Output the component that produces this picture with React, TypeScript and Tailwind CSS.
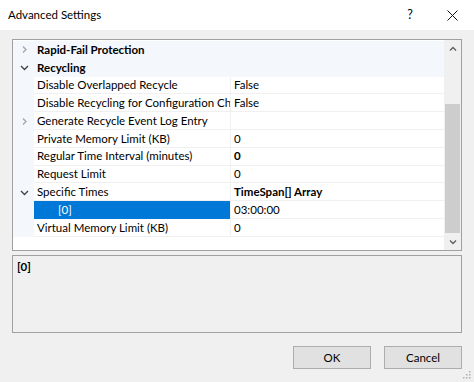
import React from 'react';

type Row = {
  name: string;
  value?: string;
  kind: 'category' | 'prop' | 'child';
  chevron?: 'collapsed' | 'expanded';
  boldValue?: boolean;
  selected?: boolean;
};

const rows: Row[] = [
  { name: 'Rapid-Fail Protection', kind: 'category', chevron: 'collapsed' },
  { name: 'Recycling', kind: 'category', chevron: 'expanded' },
  { name: 'Disable Overlapped Recycle', value: 'False', kind: 'prop' },
  { name: 'Disable Recycling for Configuration Changes', value: 'False', kind: 'prop' },
  { name: 'Generate Recycle Event Log Entry', value: '', kind: 'prop', chevron: 'collapsed' },
  { name: 'Private Memory Limit (KB)', value: '0', kind: 'prop' },
  { name: 'Regular Time Interval (minutes)', value: '0', kind: 'prop', boldValue: true },
  { name: 'Request Limit', value: '0', kind: 'prop' },
  { name: 'Specific Times', value: 'TimeSpan[] Array', kind: 'prop', chevron: 'expanded', boldValue: true },
  { name: '[0]', value: '03:00:00', kind: 'child', selected: true },
  { name: 'Virtual Memory Limit (KB)', value: '0', kind: 'prop' },
];

const Chevron: React.FC<{ dir: 'collapsed' | 'expanded' }> = ({ dir }) =>
  dir === 'collapsed' ? (
    <svg width="9" height="9" viewBox="0 0 9 9" className="block">
      <path d="M3 1.5 L6 4.5 L3 7.5" fill="none" stroke="#a6a6a6" strokeWidth="1.3" />
    </svg>
  ) : (
    <svg width="9" height="9" viewBox="0 0 9 9" className="block">
      <path d="M1 3 L4.5 6.5 L8 3" fill="none" stroke="#404040" strokeWidth="1.3" />
    </svg>
  );

const GridRow: React.FC<{ row: Row }> = ({ row }) => {
  if (row.kind === 'category') {
    return (
      <div className="flex h-[17.8px] bg-[#f4f7fc] items-center">
        <div className="w-[21px] flex justify-center pl-[1px]">
          {row.chevron && <Chevron dir={row.chevron} />}
        </div>
        <div className="pl-[3px] font-bold text-black">{row.name}</div>
      </div>
    );
  }
  return (
    <div className="flex h-[17.8px]">
      <div className="w-[21px] shrink-0 bg-[#f4f7fc] flex items-center justify-center pl-[1px]">
        {row.chevron && <Chevron dir={row.chevron} />}
      </div>
      <div
        className={
          row.selected
            ? 'w-[196px] shrink-0 bg-[#0078d7] text-white pl-[24px] flex items-center overflow-hidden whitespace-nowrap'
            : 'w-[196px] shrink-0 border-b border-[#f0f0f0] pl-[3px] flex items-center overflow-hidden whitespace-nowrap text-black'
        }
      >
        {row.name}
      </div>
      <div
        className={
          'flex-1 border-l border-b border-[#f0f0f0] pl-[3px] flex items-center whitespace-nowrap overflow-hidden text-black ' +
          (row.boldValue ? 'font-bold' : '')
        }
      >
        {row.value}
      </div>
    </div>
  );
};

export default function App() {
  return (
    <div
      className="w-[474px] h-[382px] bg-[#f0f0f0] flex flex-col relative overflow-hidden text-[11.5px] leading-none"
      style={{ fontFamily: '"Segoe UI", Lato, "Noto Sans", Arial, sans-serif' }}
    >
      <div className="h-[30px] bg-white flex items-center pl-[8px] pr-[12px] shrink-0">
        <span className="text-[11.5px] text-black">Advanced Settings</span>
        <div className="ml-auto flex items-center gap-[22px]">
          <span className="w-[20px] text-center text-[12.5px] text-black">?</span>
          <div className="w-[20px] flex justify-center">
            <svg width="11" height="11" viewBox="0 0 11 11">
              <path d="M0.5 0.5 L10.5 10.5 M10.5 0.5 L0.5 10.5" stroke="#111" strokeWidth="1" />
            </svg>
          </div>
        </div>
      </div>

      <div className="px-[12px] pt-[9px] flex flex-col">
        <div className="h-[212px] border border-[#a0a0a0] bg-white flex">
          <div className="flex-1 flex flex-col pt-[1px]">
            {rows.map((r, i) => (
              <GridRow key={i} row={r} />
            ))}
          </div>
          <div className="w-[17px] bg-[#f0f0f0] flex flex-col">
            <div className="h-[17px] flex items-center justify-center">
              <svg width="8" height="6" viewBox="0 0 8 6">
                <path d="M1 4.5 L4 1.5 L7 4.5" fill="none" stroke="#606060" strokeWidth="1.4" />
              </svg>
            </div>
            <div className="h-[47px]" />
            <div className="flex-1 bg-[#cdcdcd] mx-[1px]" />
            <div className="h-[17px] flex items-center justify-center">
              <svg width="8" height="6" viewBox="0 0 8 6">
                <path d="M1 1.5 L4 4.5 L7 1.5" fill="none" stroke="#606060" strokeWidth="1.4" />
              </svg>
            </div>
          </div>
        </div>

        <div className="mt-[4px] h-[78px] border border-[#a0a0a0] bg-[#f0f0f0] pl-[4px] pt-[5px]">
          <span className="font-bold text-black">[0]</span>
        </div>

        <div className="mt-[13px] flex justify-end gap-[13px]">
          <button className="w-[78px] h-[23px] bg-[#e1e1e1] border border-[#adadad] text-black text-[11.5px]">
            OK
          </button>
          <button className="w-[78px] h-[23px] bg-[#e1e1e1] border border-[#adadad] text-black text-[11.5px]">
            Cancel
          </button>
        </div>
      </div>

      <svg width="10" height="10" viewBox="0 0 10 10" className="absolute right-[2px] bottom-[2px]">
        <rect x="7" y="1" width="1.5" height="1.5" fill="#b0b0b0" />
        <rect x="4" y="4" width="1.5" height="1.5" fill="#b0b0b0" />
        <rect x="7" y="4" width="1.5" height="1.5" fill="#b0b0b0" />
        <rect x="1" y="7" width="1.5" height="1.5" fill="#b0b0b0" />
        <rect x="4" y="7" width="1.5" height="1.5" fill="#b0b0b0" />
        <rect x="7" y="7" width="1.5" height="1.5" fill="#b0b0b0" />
      </svg>
    </div>
  );
}
